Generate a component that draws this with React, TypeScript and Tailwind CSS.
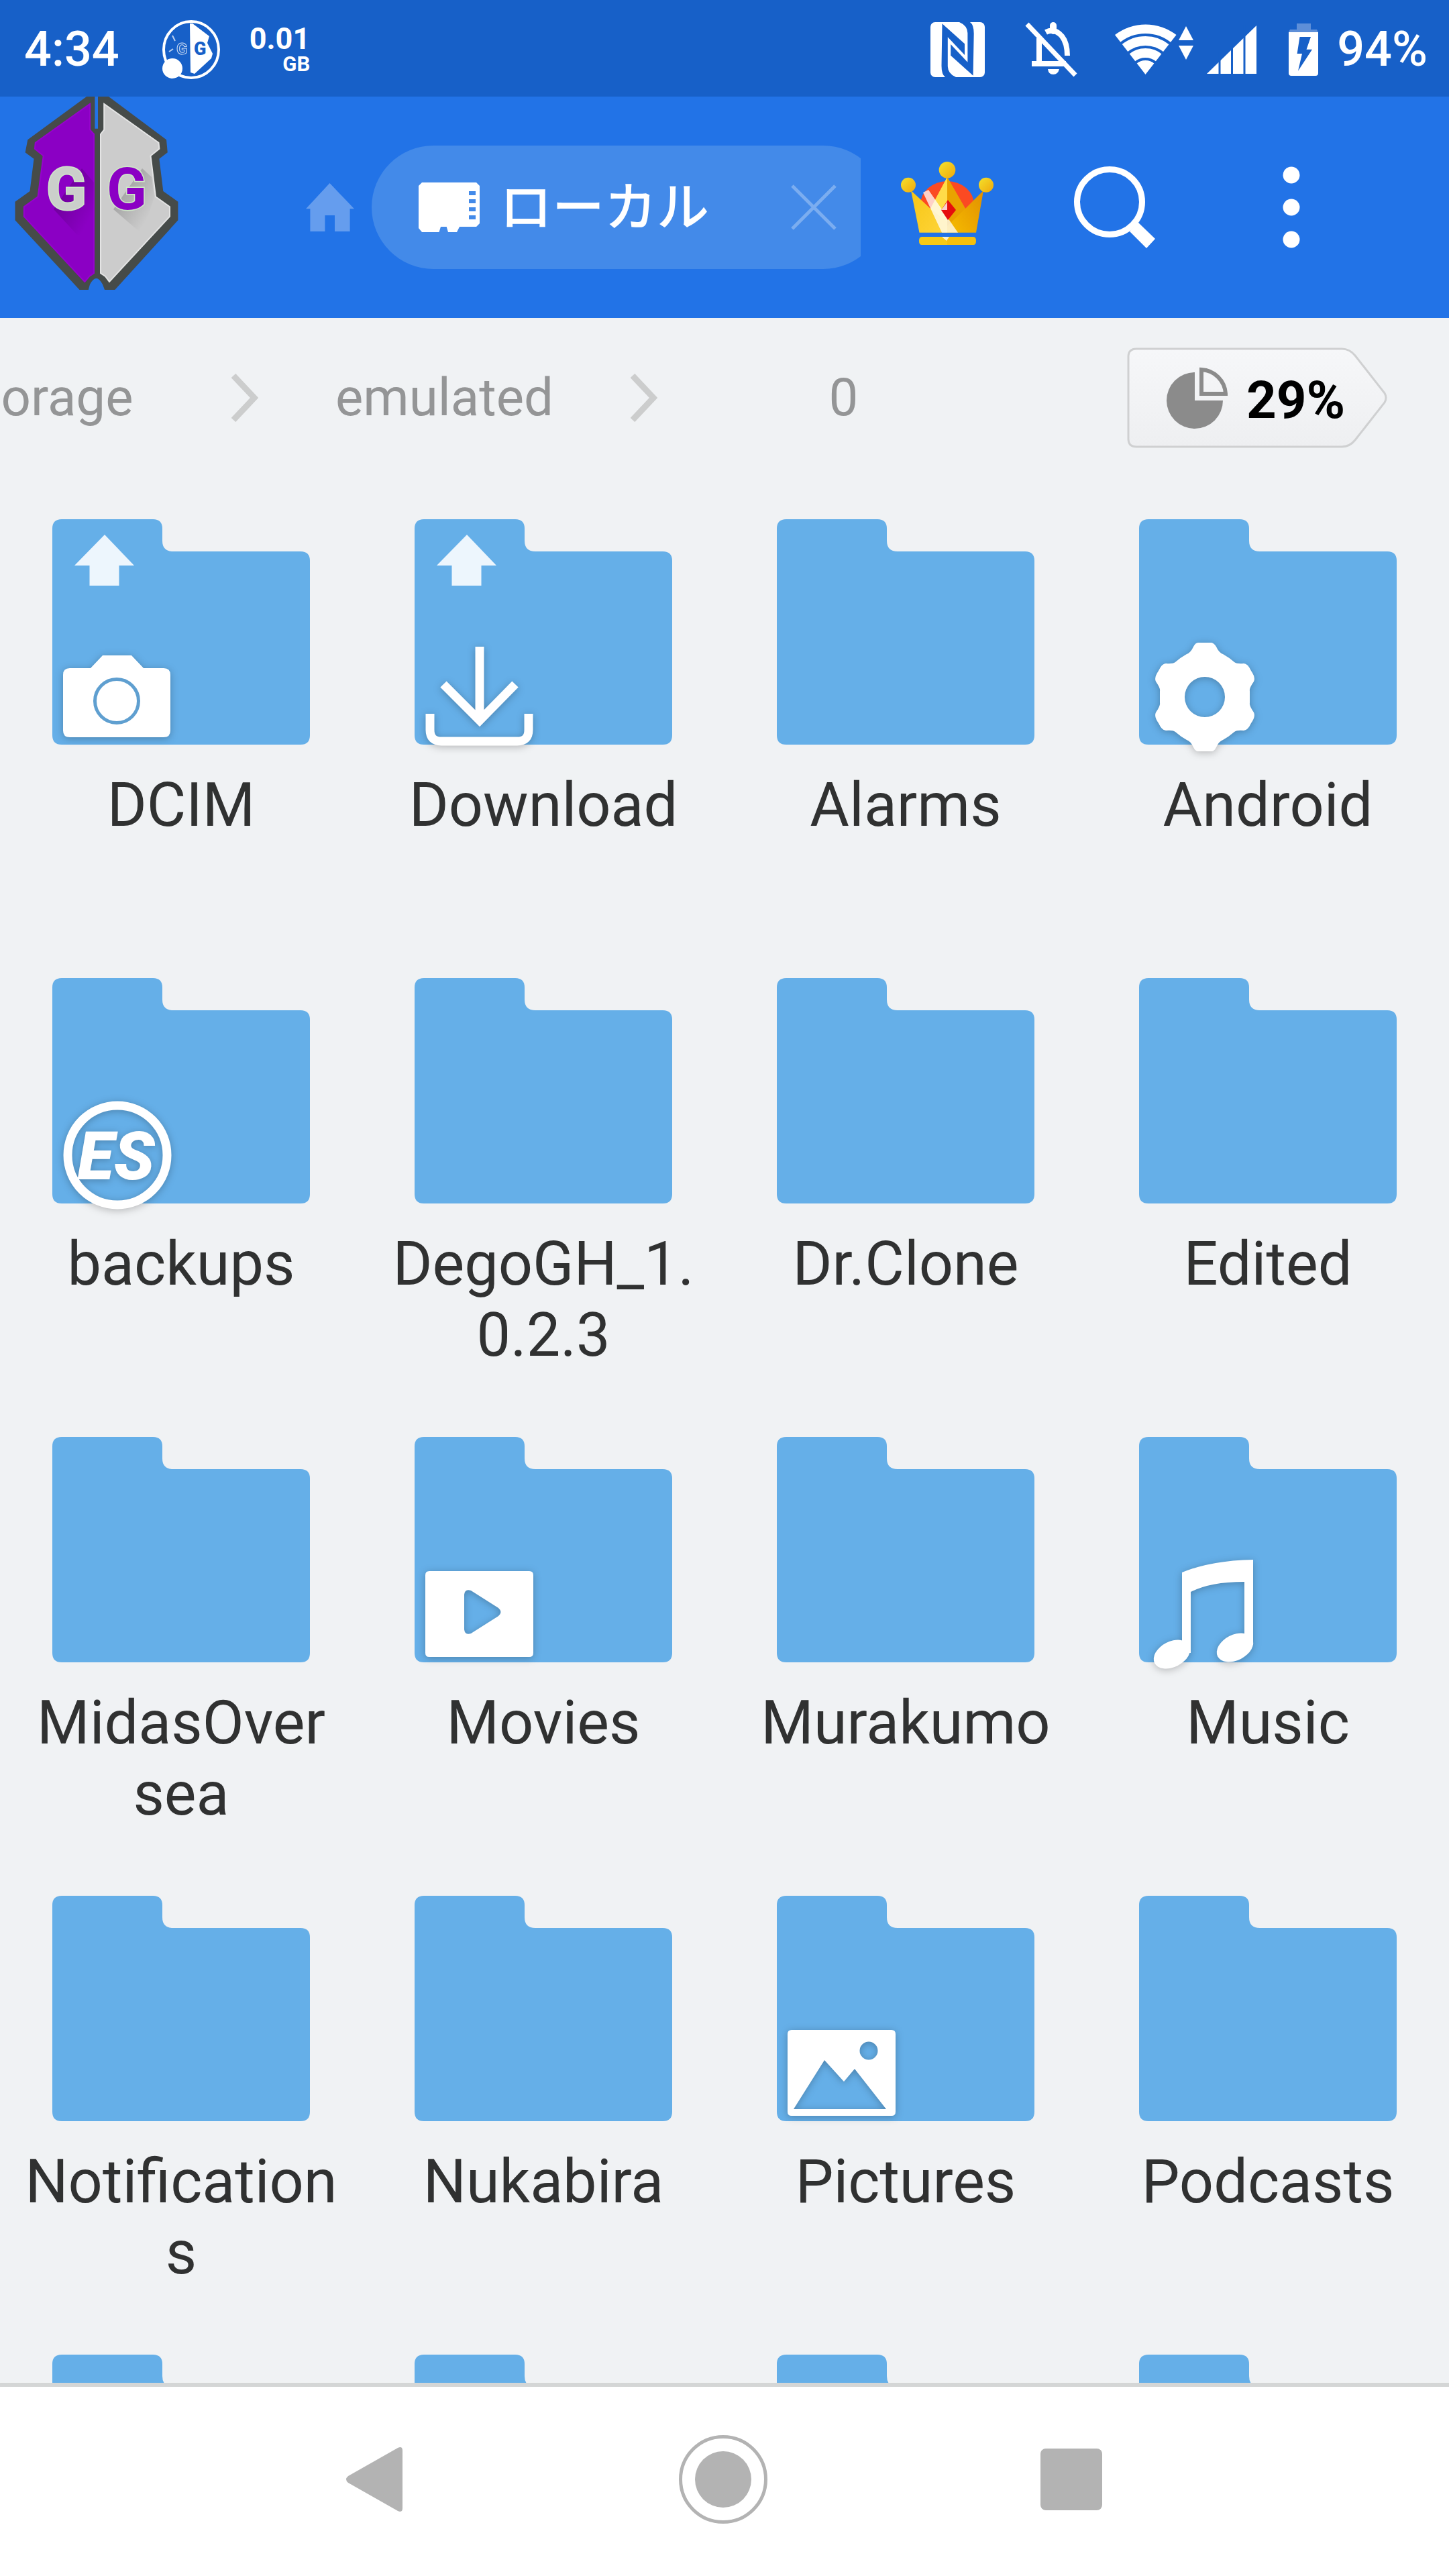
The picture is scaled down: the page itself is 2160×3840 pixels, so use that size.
import React from 'react';

type Badge = 'camera' | 'download' | 'gear' | 'es' | 'movie' | 'music' | 'picture';

interface FolderItem {
  id: number;
  name: string;
  badge?: Badge;
  pinned?: boolean;
}

const folders: FolderItem[] = [
  { id: 1, name: 'DCIM', badge: 'camera', pinned: true },
  { id: 2, name: 'Download', badge: 'download', pinned: true },
  { id: 3, name: 'Alarms' },
  { id: 4, name: 'Android', badge: 'gear' },
  { id: 5, name: 'backups', badge: 'es' },
  { id: 6, name: 'DegoGH_1.0.2.3' },
  { id: 7, name: 'Dr.Clone' },
  { id: 8, name: 'Edited' },
  { id: 9, name: 'MidasOversea' },
  { id: 10, name: 'Movies', badge: 'movie' },
  { id: 11, name: 'Murakumo' },
  { id: 12, name: 'Music', badge: 'music' },
  { id: 13, name: 'Notifications' },
  { id: 14, name: 'Nukabira' },
  { id: 15, name: 'Pictures', badge: 'picture' },
  { id: 16, name: 'Podcasts' },
  { id: 17, name: '' },
  { id: 18, name: '' },
  { id: 19, name: '' },
  { id: 20, name: '' },
];

const NfcIcon = () => (
  <svg width="81" height="82" viewBox="0 0 81 82">
    <rect width="81" height="82" rx="7" fill="#fff" />
    <g fill="#1760c8">
      <path d="M17.5 2.3 51 32.3V49L25.8 22.3V65.7Q26 77 38 82H22Q16.5 78 16.5 65Z" />
      <path d="M63.6 79.7 30.2 49.7V33L55.4 59.7V16.3Q55 5 43 0H59Q64.7 4 64.7 17Z" />
    </g>
  </svg>
);

const BellOffIcon = () => (
  <svg width="78" height="82" viewBox="0 0 78 82" fill="none" stroke="#fff" strokeWidth="7">
    <path d="M3 3 75 79" />
    <path d="M21 24V62M10 62H61" strokeWidth="8" />
    <path d="M31 15Q44 8 55 21Q63 31 63 50" strokeWidth="8" />
    <path d="M42 5V13" strokeWidth="10" strokeLinecap="round" />
    <path d="M34 70H51Q49 78 42 78T34 70Z" fill="#fff" stroke="none" />
  </svg>
);

const WifiIcon = () => (
  <svg width="117" height="76" viewBox="0 0 117 76">
    <path d="M45.5 75 0 16A75 75 0 0 1 91.5 16Z" fill="#fff" />
    <g fill="none" stroke="#1760c8" strokeWidth="4">
      <path d="M7.6 29.8A59 59 0 0 1 83.4 29.8" />
      <path d="M19 43.6A41 41 0 0 1 72 43.6" />
      <path d="M30.7 57.4A23 23 0 0 1 60.3 57.4" />
    </g>
    <path d="M95 24 106 3 117 24ZM95 32H117L106 53Z" fill="#fff" />
  </svg>
);

const SignalIcon = () => (
  <svg width="74" height="72" viewBox="0 0 74 72">
    <path d="M0 72 74 0V72Z" fill="#fff" />
    <path d="M19 40V72M37.5 20V72M56 0V72" stroke="#1760c8" strokeWidth="3" />
  </svg>
);

const BatteryIcon = () => (
  <svg width="44" height="78" viewBox="0 0 44 78">
    <path d="M12 0H33V9H42L44 13H0L2 9H12Z" fill="#5e8fd8" />
    <path d="M0 13H44V74Q44 78 40 78H4Q0 78 0 74Z" fill="#fff" />
    <path d="M16.5 20H33L26.5 38.7H35L14 70.7 20 45H12.6Z" fill="#1760c8" />
  </svg>
);

const GuardianStatusIcon = () => (
  <svg width="86" height="88" viewBox="0 0 86 88">
    <ellipse cx="43" cy="44" rx="41" ry="42" fill="none" stroke="#fff" strokeWidth="4" />
    <path d="M41 5H45L70 24 67 34 75 50 73 57 48 80 42 78Z" fill="#fff" />
    <circle cx="15" cy="72" r="15" fill="#fff" />
    <path d="M15 23 19 31M10 47 16 43" stroke="#fff" strokeWidth="2" opacity="0.7" />
    <text x="21" y="51" fontSize="24" fontWeight="700" fill="none" stroke="#fff" strokeWidth="1" opacity="0.8">G</text>
    <text x="47" y="52" fontSize="27" fontWeight="900" fill="#1760c8">G</text>
  </svg>
);

const GuardianLogo = () => (
  <svg width="244" height="288" viewBox="0 0 244 288">
    <defs>
      <linearGradient id="longShadow" x1="0" y1="0" x2="1" y2="1">
        <stop offset="0" stopColor="#000" stopOpacity="0.3" />
        <stop offset="0.8" stopColor="#000" stopOpacity="0" />
      </linearGradient>
    </defs>
    <path
      d="M107 0H119.4V47.7H124V0H140L226 64.3 227.8 83.3 215.4 92.7 221.3 141 243.4 156.7V184.3L149.3 288H134L131 280Q121.5 262 112 280L109.8 288H96.5L.5 184.3V156.7L22.5 141 28.5 92.7 15.6 83.3 19.3 64.3Z"
      fill="#464b49"
    />
    <path
      d="M112 11V49.3L118 56V263.3L111 268 104.3 276 13.8 178.7V164.3L34.5 149.3 42.7 88.3 29.9 77.7 30.8 68.7Z"
      fill="#8b00c4"
      stroke="#9603cd"
      strokeWidth="2"
    />
    <path
      d="M133.2 11V49.3L128 56V263.3L135 268 141 276 231 178.7V164.3L210 149.3 202.5 88.3 215.4 77.7 214.5 68.7Z"
      fill="#ccc"
      stroke="#e4e4e4"
      strokeWidth="2"
    />
    <path d="M58 168 100 107 118 128V215L92 205Z" fill="url(#longShadow)" />
    <path d="M147 168 190 107 204 120 208 150 190 205Z" fill="url(#longShadow)" />
    <g fontSize="88" fontWeight="700" strokeWidth="3" paintOrder="stroke">
      <text x="47" y="168" fill="#cbcfcb" stroke="#cfe8c8">G</text>
      <text x="137" y="168" fill="#8b00c4" stroke="#cfe8c8">G</text>
    </g>
  </svg>
);

const CrownIcon = () => (
  <svg width="138" height="124" viewBox="0 0 138 124">
    <defs>
      <linearGradient id="crownLeft" x1="0" y1="0" x2="1" y2="1">
        <stop offset="0" stopColor="#f5c411" />
        <stop offset="1" stopColor="#ffd53a" />
      </linearGradient>
      <linearGradient id="crownRight" x1="0" y1="1" x2="1" y2="0">
        <stop offset="0" stopColor="#f6bd00" />
        <stop offset="1" stopColor="#df8a00" />
      </linearGradient>
      <linearGradient id="crownBall" x1="0" y1="0" x2="1" y2="1">
        <stop offset="0" stopColor="#f4e22c" />
        <stop offset="1" stopColor="#f0a80c" />
      </linearGradient>
    </defs>
    <ellipse cx="69" cy="64" rx="40" ry="35" fill="#fb4a22" />
    <path d="M15 43 44 70 69 23V105.7H27.5Z" fill="url(#crownLeft)" />
    <path d="M123 43 96 70 69 23V105.7H112Z" fill="url(#crownRight)" />
    <path d="M69 23 44 70 69 90Z" fill="#ffdc48" />
    <path d="M69 23 96 70 69 96Z" fill="#e9a200" />
    <path d="M31 112H69V124H31Q27 124 27 118T31 112Z" fill="#f7c914" />
    <path d="M69 112H108Q112 112 112 118T108 124H69Z" fill="#f5bf0d" />
    <path d="M33 46 41 42 85 105.7H61ZM61 112H72L68 118Z" fill="#fff" opacity="0.75" />
    <path d="M70 57 82 72 70 87 60 72Z" fill="#e60d0d" />
    <path d="M69 60V72H60Z" fill="#fff" opacity="0.8" />
    <circle cx="69" cy="12.3" r="12.3" fill="url(#crownBall)" />
    <circle cx="11" cy="34.7" r="11" fill="url(#crownBall)" />
    <circle cx="127" cy="34.7" r="11" fill="url(#crownBall)" />
  </svg>
);

const SdCardIcon = () => (
  <svg className="shrink-0" width="91" height="74" viewBox="0 0 91 74">
    <path d="M5 0H86L91 5V61L86 66H61L57 74H44L41.7 66H33L30.5 74H5L0 68V5Z" fill="#fff" />
    <path d="M75 13H85V19H75ZM75 25H85V31H75ZM75 37H85V43H75ZM75 49H85V55H75Z" fill="#438ae9" />
  </svg>
);

const StatusBar = () => (
  <div className="flex h-36 shrink-0 items-center bg-[#1760c8] pt-1 pr-8 pl-9 text-[72px] leading-none font-medium text-white">
    <span>4:34</span>
    <div className="ml-16">
      <GuardianStatusIcon />
    </div>
    <div className="ml-11 flex flex-col items-end font-bold">
      <span className="text-[45px] leading-[44px]">0.01</span>
      <span className="text-[31px] leading-8">GB</span>
    </div>
    <div className="ml-auto flex items-center">
      <NfcIcon />
      <div className="ml-15">
        <BellOffIcon />
      </div>
      <div className="ml-14">
        <WifiIcon />
      </div>
      <div className="ml-5">
        <SignalIcon />
      </div>
      <div className="ml-12">
        <BatteryIcon />
      </div>
      <span className="ml-7">94%</span>
    </div>
  </div>
);

const Header = () => (
  <header className="flex h-[330px] shrink-0 items-center bg-[#2273e7] pr-[222px] pl-[22px]">
    <button className="shrink-0 self-start" aria-label="GG">
      <GuardianLogo />
    </button>
    <a href="#home" className="ml-[190px] shrink-0" aria-label="Home">
      <svg width="72" height="72" viewBox="0 0 72 72">
        <path d="M35.5 0 72 38.3H65.6V72H43V48H28.4V72H6.4V38.3H0Z" fill="#659dee" />
      </svg>
    </a>
    <div className="ml-[26px] flex-1 overflow-hidden">
      <div className="-mr-9 flex h-46 items-center rounded-full bg-[#438ae9] pr-18 pl-[70px]">
        <SdCardIcon />
        <span className="ml-[30px] pt-1 text-[78px] leading-none font-medium whitespace-nowrap text-white">ローカル</span>
        <button className="ml-auto" aria-label="Close">
          <svg width="68" height="68" viewBox="0 0 68 68">
            <path d="M2 2 66 66M66 2 2 66" stroke="#7badf0" strokeWidth="5" />
          </svg>
        </button>
      </div>
    </div>
    <button className="mb-3 ml-15 shrink-0" aria-label="Premium">
      <CrownIcon />
    </button>
    <button className="ml-30 shrink-0" aria-label="Search">
      <svg width="121" height="122" viewBox="0 0 121 122">
        <circle cx="53" cy="53" r="48.5" fill="none" stroke="#fff" strokeWidth="9" />
        <path d="M95 83 121 108 108 122 83 97Z" fill="#fff" />
      </svg>
    </button>
    <button className="ml-[190px] shrink-0" aria-label="Menu">
      <svg width="26" height="122" viewBox="0 0 26 122" fill="#fff">
        <circle cx="13" cy="13" r="12.5" />
        <circle cx="13" cy="61" r="12.5" />
        <circle cx="13" cy="109" r="12.5" />
      </svg>
    </button>
  </header>
);

const Chevron = () => (
  <svg className="shrink-0" width="40" height="72" viewBox="0 0 40 72">
    <path d="M3 3 34 36 3 69" fill="none" stroke="#cccdcd" strokeWidth="9" />
  </svg>
);

const PathBar = () => (
  <div className="flex h-[238px] shrink-0 items-center pr-[92px]">
    <nav className="flex flex-1 items-center overflow-hidden text-[78px] leading-[92px] text-[#949596]">
      <a href="#storage" className="-ml-[210px] w-[555px] shrink-0 text-center">storage</a>
      <Chevron />
      <a href="#emulated" className="w-[555px] shrink-0 text-center">emulated</a>
      <Chevron />
      <a href="#0" className="w-[555px] shrink-0 text-center">0</a>
    </nav>
    <button className="relative flex h-[150px] w-[388px] shrink-0 items-center pl-[58px]">
      <svg className="absolute inset-0" width="388" height="150" viewBox="0 0 388 150">
        <defs>
          <linearGradient id="tagFill" x1="0" y1="0" x2="0" y2="1">
            <stop offset="0" stopColor="#f6f7f9" />
            <stop offset="1" stopColor="#eeeff1" />
          </linearGradient>
        </defs>
        <path
          d="M14 2H320Q332 2 340 12L384 68Q388 75 384 82L340 138Q332 148 320 148H14Q2 148 2 136V14Q2 2 14 2Z"
          fill="url(#tagFill)"
          stroke="#cfd0d1"
          strokeWidth="3"
        />
      </svg>
      <svg className="relative shrink-0" width="92" height="92" viewBox="0 0 92 92">
        <path d="M43 8A42 42 0 1 0 85 50H43Z" fill="#8b8b8b" />
        <path d="M53 4V40H89A38 38 0 0 0 53 4Z" fill="none" stroke="#8b8b8b" strokeWidth="6" />
      </svg>
      <span className="relative ml-7 pt-2 text-[78px] leading-none font-bold text-black">29%</span>
    </button>
  </div>
);

const BadgeShape = ({ badge }: { badge: Badge }) => {
  switch (badge) {
    case 'camera':
      return (
        <>
          <path d="M26 222H57L75 203H118L136 222H166Q176 222 176 232V315Q176 325 166 325H26Q16 325 16 315V232Q16 222 26 222Z" fill="#fff" />
          <circle cx="96" cy="271" r="32.5" fill="none" stroke="#5f9fd0" strokeWidth="5" />
        </>
      );
    case 'download':
      return (
        <g fill="none" stroke="#fff" strokeWidth="13">
          <path d="M97 190V300M43 246 97 300 150 246" />
          <path d="M23 290V314Q23 331 40 331H153Q170 331 170 314V290" />
        </g>
      );
    case 'gear':
      return (
        <path
          fillRule="evenodd"
          fill="#fff"
          d="M88 184H108Q112 185 115 190Q119 199 125 201Q134 206 142 213Q146 216 156 215Q162 215 167 226Q174 236 171 242Q164 252 165 256V274Q164 278 171 288Q174 294 167 304Q162 315 156 315Q146 314 142 317Q134 324 125 329Q119 331 115 340Q112 346 108 346H88Q84 346 81 340Q77 331 71 329Q62 324 54 317Q50 314 40 315Q34 315 29 304Q22 294 25 288Q32 278 31 274V256Q32 252 25 242Q22 236 29 226Q34 215 40 215Q50 216 54 213Q62 206 71 201Q77 199 81 190Q84 184 88 184ZM98 235A30 30 0 1 0 98 295A30 30 0 1 0 98 235Z"
        />
      );
    case 'es':
      return (
        <>
          <circle cx="97" cy="264" r="74" fill="none" stroke="#fff" strokeWidth="13" />
          <text x="95" y="300" textAnchor="middle" fontSize="100" fontWeight="900" fontStyle="italic" fill="#fff">ES</text>
        </>
      );
    case 'movie':
      return (
        <path
          fillRule="evenodd"
          fill="#fff"
          d="M22 200H171Q177 200 177 206V322Q177 328 171 328H22Q16 328 16 322V206Q16 200 22 200ZM74 235V287Q75 296 84 293L125 267Q132 261 125 255L84 229Q75 226 74 235Z"
        />
      );
    case 'music':
      return (
        <g fill="#fff">
          <path d="M64 202Q108 184 170 183V310H157V216Q106 216 77 231V322H64Z" />
          <ellipse cx="49" cy="324" rx="29" ry="19" transform="rotate(-27 49 324)" />
          <ellipse cx="143" cy="314" rx="29" ry="19" transform="rotate(-27 143 314)" />
        </g>
      );
    case 'picture':
      return (
        <path
          fillRule="evenodd"
          fill="#fff"
          d="M22 200H171Q177 200 177 206V322Q177 328 171 328H22Q16 328 16 322V206Q16 200 22 200ZM25 318H163L116 258 100 277 71 245ZM137 217.5A13.5 13.5 0 1 0 137 244.5A13.5 13.5 0 1 0 137 217.5Z"
        />
      );
  }
};

const Folder = ({ item }: { item: FolderItem }) => (
  <button className="flex flex-col items-center justify-start">
    <svg className="shrink-0 overflow-visible" width="384" height="336" viewBox="0 0 384 336">
      <path
        d="M0 14Q0 0 14 0H150Q164 0 164 14V32Q164 48 180 48H370Q384 48 384 62V322Q384 336 370 336H14Q0 336 0 322Z"
        fill="#65afe8"
      />
      {item.pinned && <path d="M78 23 122 69H99.5V99H55.5V69H33Z" fill="#edf6fd" />}
      {item.badge && (
        <g className="drop-shadow-[0_2px_6px_rgba(0,0,0,0.25)]">
          <BadgeShape badge={item.badge} />
        </g>
      )}
    </svg>
    <span className="mt-[38px] w-[472px] text-center text-[90px] leading-[106px] wrap-break-word text-[#303131]">
      {item.name}
    </span>
  </button>
);

const NavBar = () => (
  <nav className="flex h-72 shrink-0 items-center justify-between border-t-6 border-[#d4d6d6] bg-white pr-[23%] pb-1.5 pl-[22.8%]">
    <button className="flex w-33 justify-center" aria-label="Back">
      <svg width="84" height="96" viewBox="0 0 84 96">
        <path d="M3 43 77 1Q84 -2 84 5V91Q84 98 77 95L3 53Q-3 48 3 43Z" fill="#b3b3b3" />
      </svg>
    </button>
    <button className="flex w-33 justify-center" aria-label="Home">
      <svg width="132" height="132" viewBox="0 0 132 132">
        <circle cx="66" cy="66" r="63.5" fill="none" stroke="#b3b3b3" strokeWidth="5" />
        <circle cx="66" cy="66" r="42" fill="#b3b3b3" />
      </svg>
    </button>
    <button className="flex w-33 justify-center" aria-label="Recent">
      <span className="size-[92px] rounded-lg bg-[#b3b3b3]" />
    </button>
  </nav>
);

export default function App() {
  return (
    <div className="flex h-screen flex-col overflow-hidden bg-[#f0f2f4] [font-family:Roboto,'Noto_Sans_CJK_JP',sans-serif]">
      <StatusBar />
      <Header />
      <PathBar />
      <main className="min-h-0 flex-1 overflow-hidden pt-[62px]">
        <div className="grid auto-rows-[684px] grid-cols-4">
          {folders.map((item) => (
            <Folder key={item.id} item={item} />
          ))}
        </div>
      </main>
      <NavBar />
    </div>
  );
}
